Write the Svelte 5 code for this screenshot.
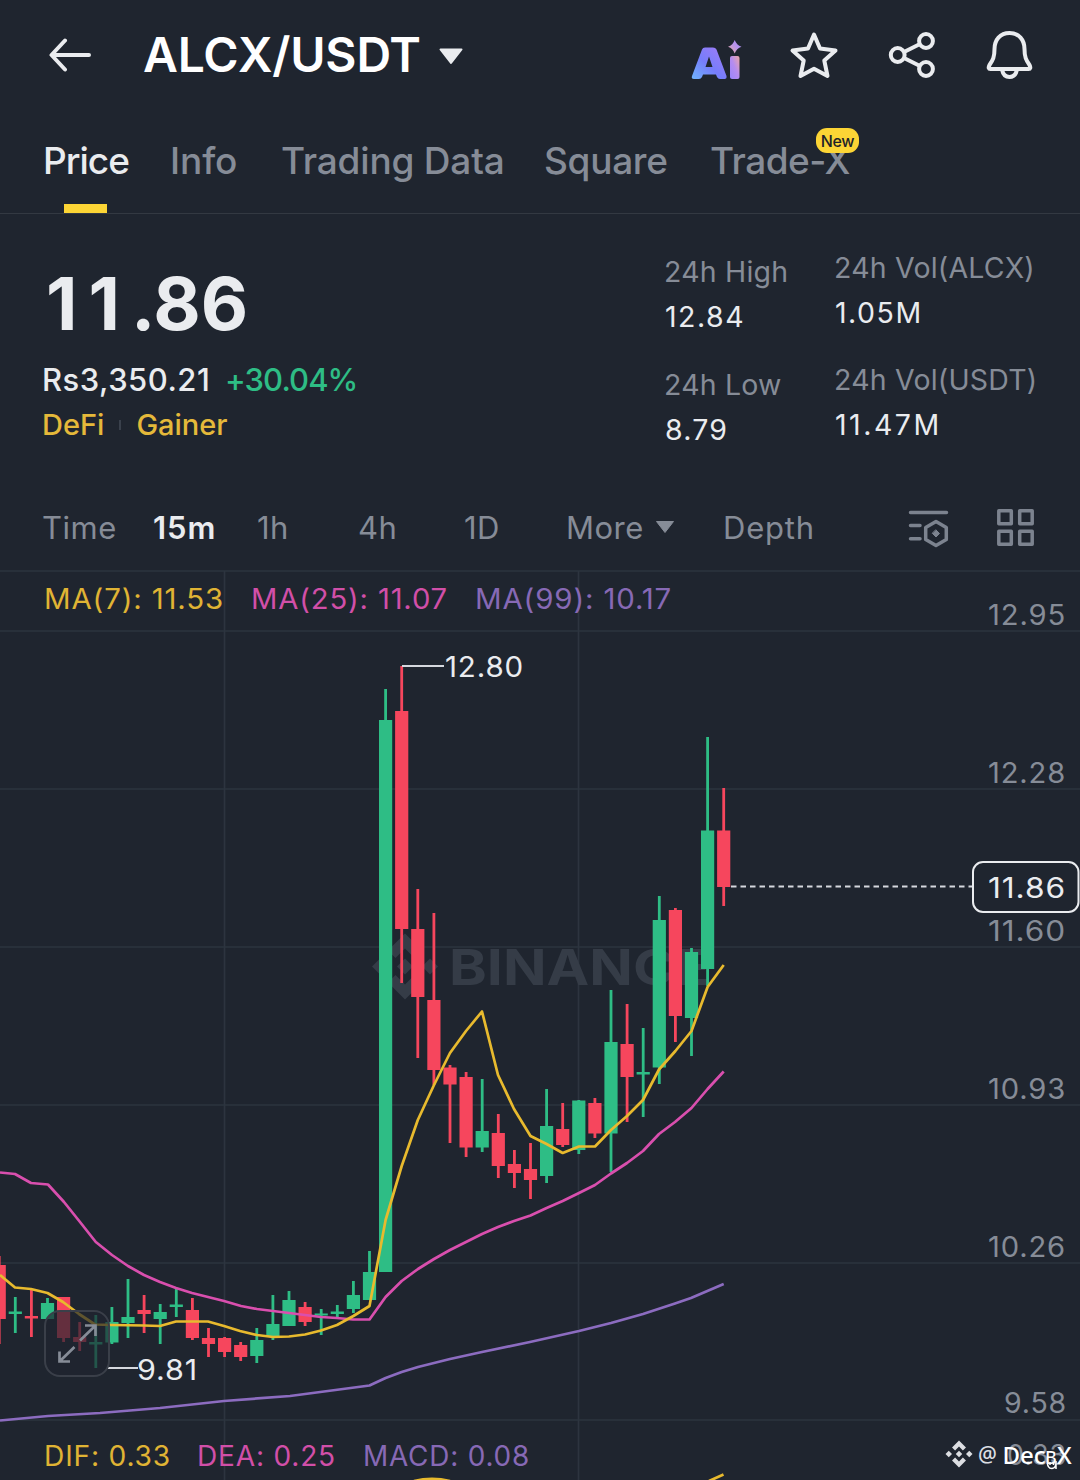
<script>
	const tabs = [
		{ name: 'Price', spacing: -1 },
		{ name: 'Info', spacing: -0.1 },
		{ name: 'Trading Data', spacing: -0.2 },
		{ name: 'Square', spacing: -0.3 },
		{ name: 'Trade-X', spacing: -0.5 }
	];
	const intervals = ['Time', '15m', '1h', '4h', '1D'];

	let activeTab = $state('Price');
	let activeInterval = $state('15m');

	const stats = [
		{ label: '24h High', value: '12.84', spacing: 1.5 },
		{ label: '24h Low', value: '8.79', spacing: 1.2 }
	];
	const volumes = [
		{ label: '24h Vol(ALCX)', value: '1.05M', spacing: 1.5 },
		{ label: '24h Vol(USDT)', value: '11.47M', spacing: 2.5 }
	];

	const gridLines = [
		{ y: 631, label: '12.95', x: 988, width: 78 },
		{ y: 789, label: '12.28', x: 988, width: 78 },
		{ y: 947, label: '11.60', x: 988, width: 78 },
		{ y: 1105, label: '10.93', x: 988, width: 78 },
		{ y: 1263, label: '10.26', x: 988, width: 78 },
		{ y: 1420, label: '9.58', x: 1004, width: 63 }
	];

	// Candles: [up, high, bodyTop, bodyBottom, low]
	const candles = [
		[0, 1256, 1265, 1319, 1344],
		[1, 1297, 1311.5, 1314, 1333],
		[0, 1289, 1316, 1318.5, 1337],
		[1, 1298, 1303, 1319, 1319],
		[0, 1297, 1297, 1338, 1342],
		[0, 1322, 1337, 1342, 1351],
		[1, 1315, 1342, 1344.5, 1368],
		[1, 1307, 1322, 1342.5, 1344],
		[1, 1279, 1317, 1323, 1338],
		[0, 1295, 1310, 1314, 1333],
		[1, 1304, 1312, 1319, 1344],
		[1, 1289, 1304.5, 1307, 1317],
		[0, 1298, 1310, 1338, 1340],
		[0, 1328, 1338, 1344, 1357],
		[0, 1337, 1338, 1352, 1357],
		[0, 1342, 1345, 1357, 1361],
		[1, 1328, 1340, 1356, 1363],
		[1, 1295, 1324, 1336, 1340],
		[1, 1291, 1300, 1326, 1326],
		[0, 1302, 1307, 1322, 1326],
		[1, 1309, 1313.5, 1315.5, 1335],
		[1, 1305, 1311.5, 1314, 1317],
		[1, 1281, 1295, 1309, 1313],
		[1, 1251, 1272, 1300, 1300],
		[1, 689, 720, 1272, 1272],
		[0, 666, 711, 929, 983],
		[0, 889, 929, 997, 1058],
		[0, 913, 1000, 1070, 1085],
		[0, 1065, 1067.5, 1084.5, 1143],
		[0, 1072, 1077, 1147.5, 1157],
		[1, 1079, 1131, 1147.5, 1152],
		[0, 1114, 1133, 1166, 1178],
		[0, 1150, 1164, 1173, 1188],
		[0, 1143, 1169, 1180, 1199],
		[1, 1089, 1126, 1176, 1183],
		[0, 1103, 1129, 1145, 1147],
		[1, 1100, 1100.5, 1150, 1154],
		[0, 1098, 1103, 1133.5, 1138],
		[1, 990, 1042, 1133.5, 1172],
		[0, 1004, 1044, 1077, 1122],
		[1, 1028, 1072, 1074.5, 1117],
		[1, 896, 920, 1067.5, 1084],
		[0, 908, 910, 1016, 1042],
		[1, 948, 952, 1018, 1056],
		[1, 737, 830.5, 969, 986],
		[0, 788, 830.5, 887, 906]
	];
	const candleX = (i) => -0.8 + i * 16.1;

	const ma7 =
		'0,1275 15,1287.5 31,1289 47.5,1293 63,1302 79,1314 95,1324.5 112,1325 144,1325.5 160,1326 176,1321.5 208,1321.5 224,1326 240,1331 257,1335 273,1337 289,1336.5 305,1334.5 321,1330.5 337,1325 353.4,1316 369.5,1306 385.6,1220 401.7,1166 417.8,1120 434,1085 450,1053 466,1031 482,1011.5 498,1075 514,1109 530.5,1136 546.6,1144 562.7,1153 579,1146.5 595,1146.5 611,1130 627,1116 643,1100 659,1069.5 675.4,1051 691.5,1031 707.6,987 723.7,965';
	const ma25 =
		'0,1172.5 15,1174 31,1183 48,1184.5 64,1202 80,1222 95.8,1242 112,1255 128,1266 144,1275 160,1282 176,1288 192,1293 208,1297 224,1301 241,1306 257,1309 273,1311 289,1313 305,1315 321,1317 337,1318 353,1319.5 369.5,1319.5 385.6,1297 401.7,1281 418,1269 434,1259 450,1250 466,1242 482,1234 498,1227 514,1221 530.5,1215.5 546.6,1208 562.7,1201 579,1193 595,1185 611,1173.5 627,1163 643,1151 659,1134 675,1122 691.5,1108 707.6,1089 723.7,1071.5';
	const ma99 =
		'0,1420.5 48,1416 100,1413 160,1408 224,1401 290,1396 369.5,1385.5 385.6,1378 401.7,1372 418,1367 450,1359 482,1352 530,1342 579,1331 611,1323 643,1314 675,1303.5 691,1298 723.7,1284';

	const legend = [
		{ text: 'MA(7): 11.53', x: 44, y: 609, width: 180, cls: 'yellow' },
		{ text: 'MA(25): 11.07', x: 251, y: 609, width: 197, cls: 'pink' },
		{ text: 'MA(99): 10.17', x: 475, y: 609, width: 197, cls: 'purple' },
		{ text: 'DIF: 0.33', x: 44, y: 1466, width: 127, cls: 'yellow' },
		{ text: 'DEA: 0.25', x: 197, y: 1466, width: 139, cls: 'pink' },
		{ text: 'MACD: 0.08', x: 363, y: 1466, width: 167, cls: 'purple' }
	];
</script>

{#snippet binanceLogo()}
	<path d="M-17 -9 L0 -26 L17 -9 L9.5 -1.5 L0 -11 L-9.5 -1.5 Z" transform="translate(0 -7)" />
	<path d="M-17 9 L0 26 L17 9 L9.5 1.5 L0 11 L-9.5 1.5 Z" transform="translate(0 7)" />
	<path d="M0 -8 L8 0 L0 8 L-8 0 Z" />
	<path d="M-25 -8 L-17 0 L-25 8 L-33 0 Z" />
	<path d="M25 -8 L33 0 L25 8 L17 0 Z" />
{/snippet}

{#snippet label(text, x, y, width, cls)}
	<text class="label {cls}" {x} {y} textLength={width} lengthAdjust="spacingAndGlyphs">{text}</text>
{/snippet}

<main>
	<header>
		<button class="back" aria-label="Back">
			<svg width="42" height="34" viewBox="0 0 42 34">
				<path d="M16 2.5 L2.5 17 L16 31.5 M3 17 H40" />
			</svg>
		</button>
		<h1>ALCX/USDT</h1>
		<svg class="caret" width="24" height="17" viewBox="0 0 24 17">
			<path d="M1.5 1.5 H22.5 L12 15 Z" />
		</svg>
		<div class="actions">
			<svg width="52" height="50" viewBox="690 30 52 50">
				<defs>
					<linearGradient id="ai" x1="0" y1="1" x2="1" y2="0">
						<stop offset="0" stop-color="#6fb4fb" />
						<stop offset="0.45" stop-color="#767dfb" />
						<stop offset="1" stop-color="#a47cf5" />
					</linearGradient>
					<linearGradient id="dot" x1="1" y1="0" x2="0" y2="1">
						<stop offset="0" stop-color="#eba7a5" />
						<stop offset="0.5" stop-color="#b58cf0" />
						<stop offset="1" stop-color="#9b86fa" />
					</linearGradient>
					<linearGradient id="spark" x1="1" y1="0" x2="0" y2="1">
						<stop offset="0" stop-color="#a98cf8" />
						<stop offset="0.45" stop-color="#b893ec" />
						<stop offset="1" stop-color="#efb09a" />
					</linearGradient>
				</defs>
				<path
					fill="url(#ai)"
					fill-rule="evenodd"
					d="M705 47.500 H713 Q715.500 47.500 716.500 49.500 L726.500 76 Q727 79 724.500 79 H720 Q718 79 717 77 L716 74.500 H703 L702 77 Q701 79 699 79 H694 Q691 79 692 76 L702 49.500 Q702.700 47.500 705 47.500 Z M709 56.500 L705.500 67 H712.500 Z"
				/>
				<rect x="730" y="56" width="9.500" height="23" rx="2" fill="url(#dot)" />
				<path
					fill="url(#spark)"
					d="M734.700 40 Q736.500 45 741.500 46.700 Q736.500 48.500 734.700 53.500 Q733 48.500 728 46.700 Q733 45 734.700 40 Z"
				/>
			</svg>
			<svg class="line" width="52" height="52" viewBox="788 29 52 52">
				<path
					d="M814 34.500 L820 48.500 L835.500 50.500 L824.300 60.500 L827.500 76 L814 68.800 L800.500 76 L803.700 60.500 L792.500 50.500 L808 48.500 Z"
				/>
			</svg>
			<svg class="line" width="52" height="52" viewBox="886 29 52 52">
				<circle cx="897.700" cy="55" r="6.900" />
				<circle cx="926" cy="41" r="6.900" />
				<circle cx="926" cy="69" r="6.900" />
				<path d="M904 52 L920 44 M904 58 L920 66" />
			</svg>
			<svg class="line" width="52" height="54" viewBox="984 28 52 54">
				<path
					d="M1009.500 33 C1000 33 994.500 40 994.500 49 C994.500 57 993 60 989.500 65 Q987.500 69 990.500 69 H1028.500 Q1031.500 69 1029.500 65 C1026 60 1024.500 57 1024.500 49 C1024.500 40 1019 33 1009.500 33 Z"
				/>
				<path d="M1002 69.500 Q1003.500 77 1009.500 77 Q1015.500 77 1017 69.500" />
			</svg>
		</div>
	</header>

	<nav class="tabs">
		{#each tabs as tab}
			<button
				class:active={activeTab === tab.name}
				style="letter-spacing: {tab.spacing}px"
				onclick={() => (activeTab = tab.name)}
			>
				{tab.name}
				{#if tab.name === 'Trade-X'}
					<span class="badge">New</span>
				{/if}
			</button>
		{/each}
	</nav>

	<section class="summary">
		<div class="quote">
			<div class="price"><span>11</span>.86</div>
			<div class="fiat">Rs3,350.21 <span class="change">+30.04%</span></div>
			<div class="tags"><span>DeFi</span><i></i><span>Gainer</span></div>
		</div>
		<dl class="range">
			{#each stats as item}
				<dt>{item.label}</dt>
				<dd style="letter-spacing: {item.spacing}px">{item.value}</dd>
			{/each}
		</dl>
		<dl class="volume">
			{#each volumes as item}
				<dt>{item.label}</dt>
				<dd style="letter-spacing: {item.spacing}px">{item.value}</dd>
			{/each}
		</dl>
	</section>

	<nav class="intervals">
		{#each intervals as item}
			<button class:active={activeInterval === item} onclick={() => (activeInterval = item)}>
				{item}
			</button>
		{/each}
		<button class="more">
			More
			<svg width="20" height="15" viewBox="0 0 20 15"><path d="M1.500 1.500 H18.500 L10 12.500 Z" /></svg>
		</button>
		<button class="depth">Depth</button>
		<svg class="tool" width="42" height="40" viewBox="908 508 42 40">
			<path d="M910.500 512.500 H946.500 M910.500 525.500 H920 M910.500 538.700 H920" />
			<path d="M936 521.500 L946.300 527.500 V539.500 L936 545.500 L925.700 539.500 V527.500 Z" />
			<path class="solid" d="M936 530 L939.500 533.500 L936 537 L932.500 533.500 Z" />
		</svg>
		<svg class="tool" width="40" height="40" viewBox="996 508 40 40">
			<rect x="998.800" y="510.800" width="12.500" height="13" />
			<rect x="1019.700" y="510.800" width="12.500" height="13" />
			<rect x="998.800" y="531.200" width="12.500" height="13" />
			<rect x="1019.700" y="531.200" width="12.500" height="13" />
		</svg>
	</nav>

	<svg class="chart" width="1080" height="910" viewBox="0 570 1080 910">
		<!-- grid -->
		<g class="grid">
			<path d="M0 571 H1080" stroke-width="2.500" />
			{#each gridLines as line}
				<path d="M0 {line.y} H1080" />
			{/each}
			<path d="M224.500 571 V1480 M578.500 571 V1480" />
		</g>

		<g class="watermark">
			<g transform="translate(405 966.500)">{@render binanceLogo()}</g>
			<text x="449" y="985" textLength="261" lengthAdjust="spacingAndGlyphs">BINANCE</text>
		</g>

		{#each candles as [up, high, top, bottom, low], i}
			<g class={up ? 'up' : 'down'}>
				<rect x={candleX(i) - 1.4} y={high} width="2.800" height={low - high} />
				<rect x={candleX(i) - 6.6} y={top} width="13.200" height={bottom - top} />
			</g>
		{/each}

		<g class="averages">
			<polyline class="purple" points={ma99} />
			<polyline class="pink" points={ma25} />
			<polyline class="yellow" points={ma7} />
			<path class="yellow" d="M414 1481 Q432 1476.500 450 1481 M709 1481 L723.500 1474.500" />
		</g>

		{#each legend as item}
			{@render label(item.text, item.x, item.y, item.width, item.cls)}
		{/each}

		{#each gridLines as line}
			{@render label(line.label, line.x, line.y === 1420 ? 1413 : line.y - 6, line.width, 'axis')}
		{/each}
		{@render label('0.33', 1007, 1465, 60, 'axis')}

		<!-- high and low markers -->
		<path class="marker" d="M402 666 H444 M108 1368 H138" />
		{@render label('12.80', 445, 677, 79, 'light')}
		{@render label('9.81', 137, 1380, 61, 'light')}

		<!-- last price -->
		<path class="last" d="M731 886.500 H972" />
		<rect class="last-box" x="973" y="862" width="105.500" height="50" rx="10" />
		{@render label('11.86', 988, 898, 78, 'light')}

		<g class="expand">
			<rect x="45" y="1311" width="64" height="65" rx="15" />
			<path d="M80 1340.500 L95.500 1325.500 M85 1325.500 H95.500 V1336 M74.500 1347 L59.500 1361.500 M59.500 1351.500 V1361.500 H70" />
		</g>

		<g class="author">
			<g transform="translate(959 1454) scale(0.410)">{@render binanceLogo()}</g>
			<text class="at" x="978" y="1462" textLength="20">@</text>
			<text x="1002.500" y="1464" textLength="43">Dec</text>
			<text x="1057" y="1464" textLength="15">X</text>
			<text class="small" x="1045" y="1464">B</text>
			<path class="squiggle" d="M1047.500 1461 Q1047 1468.500 1052 1468.500 Q1056.500 1468 1056 1461 M1050 1462 V1465 M1053.500 1462 V1465 M1056 1464 V1469" />
		</g>
	</svg>
</main>

<style>
	:global(body) {
		margin: 0;
		background: #1f252f;
	}

	main {
		width: 1080px;
		height: 1480px;
		overflow: hidden;
		background: #1f252f;
		color: #eaecef;
		font-family: Inter, 'Noto Sans', sans-serif;
	}

	svg {
		display: block;
		flex: none;
	}

	button {
		padding: 0;
		border: 0;
		background: none;
		color: inherit;
		font: inherit;
		letter-spacing: inherit;
		white-space: nowrap;
		text-align: left;
	}

	header {
		display: flex;
		align-items: center;
		height: 110px;
		padding-left: 49px;
	}

	.back path {
		fill: none;
		stroke: #eaecef;
		stroke-width: 4;
		stroke-linecap: round;
		stroke-linejoin: round;
	}

	h1 {
		width: 278px;
		margin: 0 0 0 52px;
		color: #fff;
		font-size: 48px;
		font-weight: 600;
		line-height: 58px;
		letter-spacing: -0.2px;
	}

	.caret {
		margin-left: 18px;
		margin-top: 3px;
		fill: #eaecef;
		stroke: #eaecef;
		stroke-width: 2;
		stroke-linejoin: round;
	}

	.actions {
		display: flex;
		align-items: center;
		gap: 46px;
		margin-left: 227px;
	}

	.line {
		fill: none;
		stroke: #eaecef;
		stroke-width: 4;
		stroke-linejoin: round;
	}

	.tabs {
		display: grid;
		grid-template-columns: 127px 111px 263px 166px auto;
		justify-content: start;
		box-sizing: border-box;
		height: 104px;
		padding-left: 43px;
		border-bottom: 1px solid #333942;
		color: #868c97;
		font-size: 37px;
		font-weight: 500;
		line-height: 98px;
	}

	.tabs button {
		position: relative;
		height: 103px;
		padding-bottom: 2px;
	}

	.tabs .active {
		color: #eaecef;
	}

	.tabs .active::after {
		content: '';
		position: absolute;
		left: 21px;
		bottom: 0;
		width: 43px;
		height: 9px;
		background: #fcd535;
	}

	.badge {
		position: absolute;
		top: 18px;
		left: 106px;
		width: 43px;
		height: 25px;
		border-radius: 11px;
		background: #fcd535;
		color: #1e2329;
		font-size: 16px;
		line-height: 26px;
		letter-spacing: -0.3px;
		text-align: center;
	}

	.summary {
		display: grid;
		grid-template-columns: 622px 170px 1fr;
		box-sizing: border-box;
		height: 271px;
		padding-left: 42px;
	}

	.price {
		margin-top: 45px;
		padding-left: 4px;
		font-size: 73px;
		font-weight: 700;
		line-height: 90px;
		letter-spacing: 0;
	}

	.price span {
		letter-spacing: 11px;
	}

	.fiat {
		margin-top: 12px;
		font-size: 31px;
		font-weight: 500;
		line-height: 38px;
		letter-spacing: 0.5px;
	}

	.change {
		margin-left: 6px;
		color: #2ebd85;
		letter-spacing: -0.9px;
	}

	.tags {
		display: flex;
		align-items: center;
		margin-top: 8px;
		color: #e5b93a;
		font-size: 29px;
		font-weight: 500;
		line-height: 36px;
	}

	.tags i {
		width: 2px;
		height: 10px;
		margin: 0 15px;
		background: #3a414c;
	}

	dl {
		margin: 0;
		font-size: 28.5px;
		line-height: 36px;
	}

	dt {
		color: #868c97;
		letter-spacing: 0.2px;
		white-space: nowrap;
	}

	dd {
		margin: 9px 0 32px;
		padding-left: 1px;
	}

	.range {
		padding-top: 40px;
	}

	.volume {
		padding-top: 36px;
	}

	.volume dd {
		margin-bottom: 31px;
	}

	.intervals {
		display: grid;
		grid-template-columns: 111px 104px 101px 106px 102px 157px 185px 88px 40px;
		align-items: center;
		height: 86px;
		padding-left: 42px;
		color: #868c97;
		font-size: 31px;
		letter-spacing: 0.5px;
	}

	.intervals button {
		padding-bottom: 2px;
	}

	.intervals .active {
		color: #eaecef;
		font-weight: 600;
		letter-spacing: 1px;
	}

	.more {
		display: flex;
		align-items: center;
		gap: 11px;
	}

	.depth {
		letter-spacing: 0.8px;
	}

	.more svg {
		fill: #868c97;
		stroke: #868c97;
		stroke-linejoin: round;
	}

	.tool {
		fill: none;
		stroke: #7c838f;
		stroke-width: 3.5;
		stroke-linecap: round;
		stroke-linejoin: round;
	}

	.tool .solid {
		fill: #7c838f;
		stroke-width: 1;
	}

	.chart {
		margin-top: -1px;
	}

	.grid path {
		stroke: #2d343f;
		stroke-width: 1.7;
	}

	.watermark {
		fill: #353c47;
		font-size: 49px;
		font-weight: 700;
	}

	.up {
		fill: #2ebd85;
	}

	.down {
		fill: #f6465d;
	}

	.averages {
		fill: none;
		stroke-width: 2.7;
		stroke-linejoin: round;
	}

	.averages .yellow {
		stroke: #e8ba2e;
	}

	.averages .pink {
		stroke: #d94fae;
	}

	.averages .purple {
		stroke: #8c6cc0;
	}

	.label {
		font-size: 28px;
		letter-spacing: 0.8px;
	}

	text.yellow {
		fill: #e0b434;
	}

	text.pink {
		fill: #d14fa8;
	}

	text.purple {
		fill: #8769b5;
	}

	.axis {
		fill: #868c97;
	}

	.light {
		fill: #eaecef;
	}

	.marker {
		stroke: #d5d8de;
		stroke-width: 2;
	}

	.last {
		stroke: #d5d8de;
		stroke-width: 2;
		stroke-dasharray: 5.5 4;
	}

	.last-box {
		fill: #1f252f;
		stroke: #eaecef;
		stroke-width: 2;
	}

	.expand rect {
		fill: #1f252f;
		fill-opacity: 0.68;
		stroke: #3a3f49;
		stroke-width: 2;
	}

	.expand path {
		fill: none;
		stroke: #868c97;
		stroke-width: 2.7;
	}

	.author {
		fill: #fff;
		font-family: 'Noto Sans', sans-serif;
		font-size: 24px;
		font-weight: 500;
	}

	.author g,
	.author .at {
		fill: #dcdee2;
		font-size: 21px;
	}

	.author .small {
		font-size: 18px;
	}

	.squiggle {
		fill: none;
		stroke: #fff;
		stroke-width: 1.5;
	}
</style>
